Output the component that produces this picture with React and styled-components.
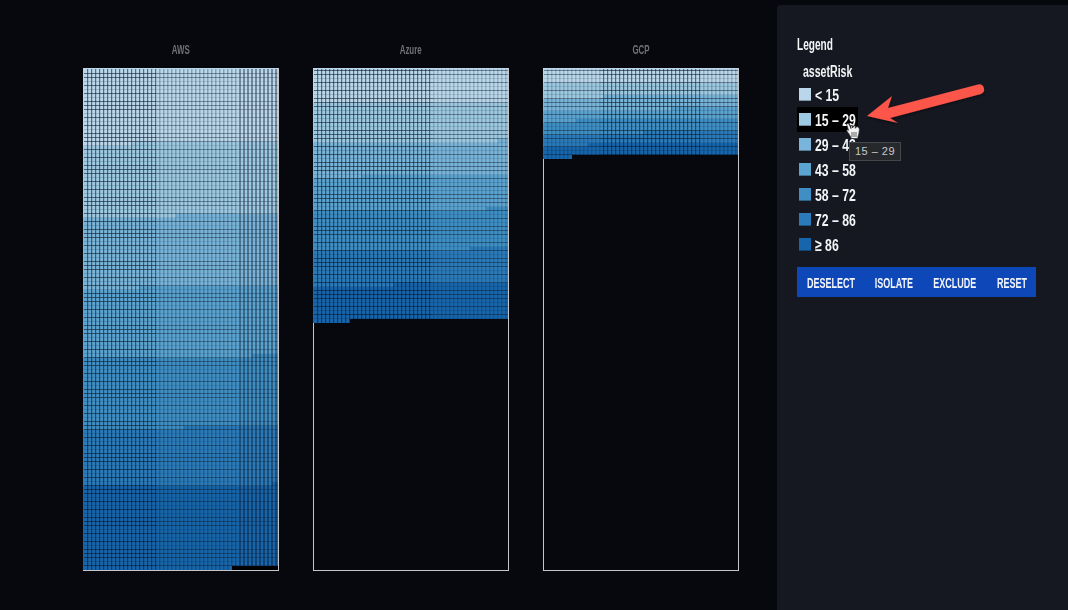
import React from 'react';
import styled, { createGlobalStyle } from 'styled-components';

const Global = createGlobalStyle`
  html, body { margin: 0; padding: 0; background: #07080d; }
  body { font-family: "Liberation Sans", Arial, sans-serif; }
`;

const COLORS = ['#b9d6ea', '#9dc9e2', '#79b5da', '#5ba3d0', '#3f8fc5', '#2b7bba', '#1765ab'];
const LEGEND = ['< 15', '15 – 29', '29 – 43', '43 – 58', '58 – 72', '72 – 86', '≥ 86'];
const ACTIONS = [['DESELECT', 47], ['ISOLATE', 39], ['EXCLUDE', 43], ['RESET', 30]];
const LINE = [0.58, 0.58, 0.58, 0.16, 0.58, 0.16, 0.58, 0.16];

const CHARTS = [
  {
    title: 'AWS', rows: 125, offset: 1, lastTo: 147, fill: '#000',
    bands: [[18, 12], [36, 23], [54, 14], [71, 42], [89, 25], [103, 47]],
    regions: [{ to: 72, a: 0.55, w: 1.2, h: 1 }, { to: 152, a: 0.28, w: 1.5, h: 0.7 }, { to: 196, a: 0.4, w: 2, h: 0.5 }],
  },
  {
    title: 'Azure', rows: 64, offset: -2, lastTo: 36, fill: 'none',
    bands: [[9, 0], [18, 46], [27, 12], [35, 43], [45, 39], [54, 20]],
    regions: [{ to: 119, a: 0.55, w: 1.2, h: 1 }, { to: 196, a: 0.2, w: 1.5, h: 0.75 }],
  },
  {
    title: 'GCP', rows: 23, offset: -2, lastTo: 27, fill: 'none',
    bands: [[4, 0], [7, 15], [10, 32], [13, 8], [16, 25], [19, 11]],
    regions: [{ to: 56, a: 0.2, w: 1.5, h: 0.75 }, { to: 156, a: 0.55, w: 1.2, h: 1 }, { to: 196, a: 0.22, w: 1.5, h: 0.8 }],
  },
];

const Page = styled.div`
  display: flex;
  width: 1068px;
  height: 610px;
  overflow: hidden;
  position: relative;
  background: #07080d;
`;
const Charts = styled.main`
  flex: 0 0 777px;
  box-sizing: border-box;
  padding: 43px 0 0 83px;
  display: flex;
  gap: 34px;
  align-items: flex-start;
`;
const Column = styled.section`
  width: 196px;
  display: flex;
  flex-direction: column;
  align-items: center;
  gap: 11px;
`;
const ChartTitle = styled.h3`
  margin: 0;
  height: 14px;
  line-height: 14px;
  font-size: 12px;
  font-weight: 700;
  color: #6f7175;
  transform: scaleX(0.66);
`;
const Frame = styled.div`
  width: 100%;
  height: 503px;
  box-sizing: border-box;
  border: 1px solid #c4c6c9;
`;
const Plot = styled.svg`
  display: block;
  width: 195px;
  height: 502px;
  margin: -1px 0 0 -1px;
`;
const Sidebar = styled.aside`
  flex: 1;
  margin-top: 5px;
  border-top-left-radius: 3px;
  background: #151821;
  box-sizing: border-box;
  padding: 31px 0 0 20px;
  color: #f4f5f7;
  display: flex;
  flex-direction: column;
  align-items: flex-start;
`;
const Heading = styled.h2`
  margin: 0;
  height: 18px;
  line-height: 18px;
  font-size: 16px;
  font-weight: 700;
  transform: scaleX(0.63);
  transform-origin: left center;
`;
const FieldName = styled.div`
  margin: 8px 0 0 6px;
  height: 20px;
  line-height: 20px;
  font-size: 16px;
  font-weight: 700;
  transform: scaleX(0.66);
  transform-origin: left center;
`;
const LegendRow = styled.div`
  width: 61px;
  height: 25px;
  box-sizing: border-box;
  padding-left: 2px;
  display: flex;
  align-items: center;
  gap: 4px;
  background: ${p => (p.$active ? '#000' : 'transparent')};
`;
const Swatch = styled.span`
  flex: none;
  width: 12px;
  height: 13px;
  margin-top: -1px;
  box-sizing: border-box;
  background: ${p => p.$color};
  border-bottom: 1px solid rgba(0, 0, 0, 0.3);
`;
const LegendLabel = styled.span`
  padding-top: 2px;
  white-space: nowrap;
  font-size: 17px;
  font-weight: 700;
  transform: scaleX(0.72);
  transform-origin: left center;
`;
const Actions = styled.div`
  margin-top: 10px;
  width: 239px;
  height: 30px;
  box-sizing: border-box;
  padding: 0 9px 0 10px;
  background: #0d47b8;
  display: flex;
  align-items: center;
  justify-content: space-between;
`;
const ActionButton = styled.button`
  flex: none;
  width: ${p => p.$width}px;
  border: 0;
  padding: 0;
  background: none;
  display: flex;
  justify-content: center;
  white-space: nowrap;
  color: #f1f4fb;
  font: 700 15px "Liberation Sans", Arial, sans-serif;
`;
const ActionText = styled.span`
  transform: scaleX(0.6);
`;
const Tooltip = styled.div`
  position: absolute;
  left: 849px;
  top: 142px;
  width: 52px;
  height: 19px;
  box-sizing: border-box;
  background: #27282c;
  border: 1px solid #45474b;
  color: #c9cacc;
  font: 11px/17px "Liberation Sans", sans-serif;
  letter-spacing: 0.5px;
  text-align: center;
`;
const Callout = styled.svg`
  position: absolute;
  left: 840px;
  top: 70px;
  width: 160px;
  height: 75px;
`;

function bandOf(r, c, bands) {
  let b = 0;
  for (const [row, split] of bands) {
    if (r > row || (r === row && c >= split)) b += 1;
  }
  return b;
}

function Heatmap({ chart }) {
  const { rows, offset, lastTo, bands, regions, fill } = chart;
  const y = r => offset + r * 4;
  const runs = [];
  for (let r = 0; r < rows; r += 1) {
    const end = r === rows - 1 ? Math.ceil(lastTo / 4) : 49;
    let start = 0;
    for (let c = 1; c <= end; c += 1) {
      if (c === end || bandOf(r, c, bands) !== bandOf(r, start, bands)) {
        const left = start === 0 ? -1 : start * 4;
        const top = r === 0 ? -1 : y(r);
        runs.push({
          key: `${r}-${start}`,
          x: left,
          y: top,
          w: c * 4 - left,
          h: y(r) + 4 - top,
          color: COLORS[bandOf(r, start, bands)],
        });
        start = c;
      }
    }
  }
  const bottom = y(rows - 1);
  const verticals = [];
  for (let c = 1; c < 49; c += 1) {
    const x = c * 4 - 1;
    const region = regions.find(g => x < g.to);
    const height = x < lastTo ? bottom + 4 : bottom;
    verticals.push(<rect key={c} x={x} y={0} width={region.w} height={height} fill="#0b1422" opacity={region.a} />);
  }
  const horizontals = [];
  for (let r = 1; r < rows; r += 1) {
    let from = 0;
    regions.forEach((g, i) => {
      horizontals.push(
        <rect key={`${r}-${i}`} x={from} y={y(r) - 1} width={Math.min(g.to, 194) - from} height={1} fill="#0b1422" opacity={LINE[r % 8] * g.h} />
      );
      from = g.to;
    });
  }
  return (
    <Plot viewBox="-1 -1 195 502" role="img" aria-label={chart.title}>
      {fill !== 'none' && <rect x={lastTo} y={bottom} width={194 - lastTo} height={4} fill={fill} />}
      {runs.map(run => <rect key={run.key} x={run.x} y={run.y} width={run.w} height={run.h} fill={run.color} />)}
      {verticals}
      {horizontals}
    </Plot>
  );
}

export default function App() {
  return (
    <Page>
      <Global />
      <Charts>
        {CHARTS.map(chart => (
          <Column key={chart.title}>
            <ChartTitle>{chart.title}</ChartTitle>
            <Frame><Heatmap chart={chart} /></Frame>
          </Column>
        ))}
      </Charts>
      <Sidebar>
        <Heading>Legend</Heading>
        <FieldName>assetRisk</FieldName>
        {LEGEND.map((label, i) => (
          <LegendRow key={label} $active={i === 1}>
            <Swatch $color={COLORS[i]} />
            <LegendLabel>{label}</LegendLabel>
          </LegendRow>
        ))}
        <Actions>
          {ACTIONS.map(([a, w]) => (
            <ActionButton key={a} $width={w}><ActionText>{a}</ActionText></ActionButton>
          ))}
        </Actions>
      </Sidebar>
      <Tooltip>15 – 29</Tooltip>
      <Callout viewBox="840 70 160 75">
        <defs>
          <filter id="soft" x="-10%" y="-20%" width="120%" height="150%">
            <feDropShadow dx="0" dy="1.5" stdDeviation="1.5" floodColor="#000" floodOpacity="0.45" />
          </filter>
        </defs>
        <path
          filter="url(#soft)"
          fill="#fc5448"
          d="M867 116 L892 96 L888 108 L978 84.5 A5 5 0 0 1 981 94 L890 118 L898 123 Z"
        />
        <path
          fill="#f2f2f2"
          stroke="#26262a"
          strokeWidth="0.7"
          d="M846.5 124 C847.5 123 849 123.500 849.500 125 L851 128.500 V125.500 H852.500 V128 L854 125.800 H855.300 V128.300 L856.500 126.800 H858 L859.500 129 L858.800 134 L857.500 138.500 H851.500 L849 134 L846.800 131 C846.500 130 847.500 129.300 848.500 130.300 Z"
        />
        <path stroke="#26262a" strokeWidth="0.7" fill="none" d="M852 132 V137 M854 132 V137 M856 132 V137" />
      </Callout>
    </Page>
  );
}
